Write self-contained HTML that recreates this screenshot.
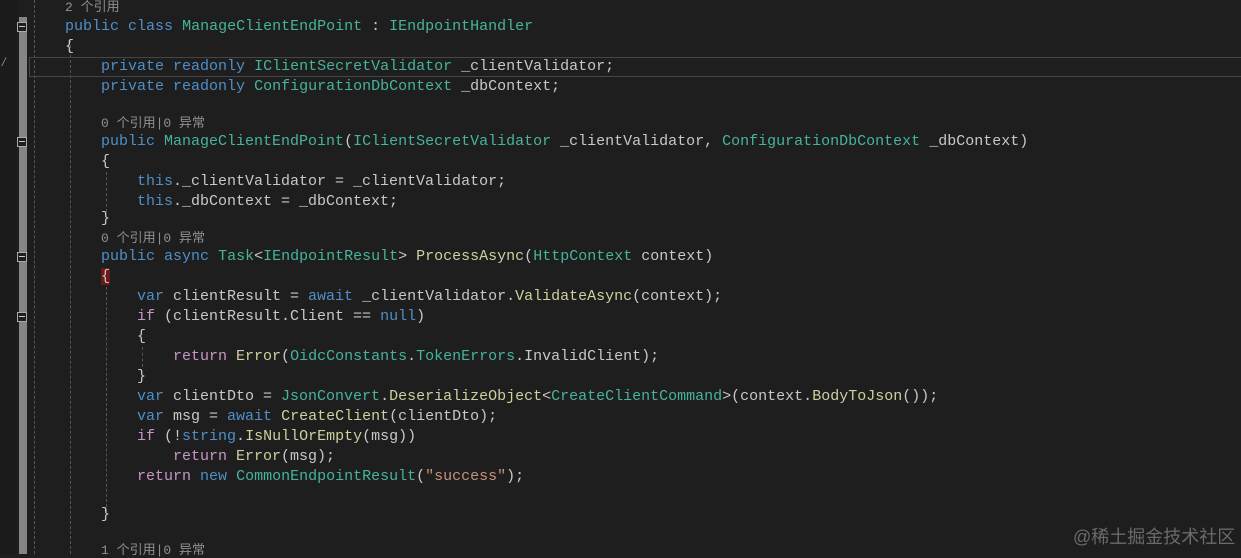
<!DOCTYPE html>
<html><head><meta charset="utf-8"><style>
body{margin:0;width:1241px;height:554px;background:#1e1e1e;overflow:hidden;position:relative;font-family:"Liberation Mono","Noto Sans CJK SC",monospace;}
.l{position:absolute;height:20px;line-height:20px;font-size:15px;color:#c8c8c8;white-space:pre;}
.c{position:absolute;font-size:13px;line-height:14px;color:#909090;white-space:pre;font-family:"Liberation Mono","Noto Sans CJK SC",monospace;}
.k{color:#4f8fc8}.t{color:#46b49c}.m{color:#cfcf9f}.r{color:#c896c8}.s{color:#c8927a}
.g{position:absolute;width:0;border-left:1px dashed #555;}
.box{position:absolute;left:17px;width:8px;height:8px;border:1px solid #aaa;background:#1e1e1e;}
.box:after{content:"";position:absolute;left:1px;top:3px;width:6px;height:1px;background:#ccc;}
</style></head><body>
<div style="position:absolute;left:0;top:0;width:17px;height:554px;background:#1b1b1b"></div>
<div style="position:absolute;left:19px;top:17px;width:8px;height:537px;background:#858585"></div>
<div class="g" style="left:34px;top:0;height:554px"></div>
<div class="g" style="left:70px;top:40px;height:514px"></div>
<div class="g" style="left:106px;top:172px;height:40px"></div>
<div class="g" style="left:106px;top:287px;height:225px"></div>
<div class="g" style="left:142px;top:347px;height:20px"></div>
<div style="position:absolute;left:29px;top:57px;width:1212px;height:18px;border:1px solid #464646"></div>
<div class="box" style="top:22px"></div>
<div class="box" style="top:137px"></div>
<div class="box" style="top:252px"></div>
<div class="box" style="top:312px"></div>
<div style="position:absolute;left:0;top:55px;color:#aaa;font-size:13px">&#8260;</div>

<div class="c" style="left:65px;top:1px">2 个引用</div>
<div class="l" style="left:65px;top:17px"><span class="k">public</span> <span class="k">class</span> <span class="t">ManageClientEndPoint</span> : <span class="t">IEndpointHandler</span></div>
<div class="l" style="left:65px;top:37px">{</div>
<div class="l" style="left:101px;top:57px"><span class="k">private</span> <span class="k">readonly</span> <span class="t">IClientSecretValidator</span> _clientValidator;</div>
<div class="l" style="left:101px;top:77px"><span class="k">private</span> <span class="k">readonly</span> <span class="t">ConfigurationDbContext</span> _dbContext;</div>
<div class="c" style="left:101px;top:117px">0 个引用|0 异常</div>
<div class="l" style="left:101px;top:132px"><span class="k">public</span> <span class="t">ManageClientEndPoint</span>(<span class="t">IClientSecretValidator</span> _clientValidator, <span class="t">ConfigurationDbContext</span> _dbContext)</div>
<div class="l" style="left:101px;top:152px">{</div>
<div class="l" style="left:137px;top:172px"><span class="k">this</span>._clientValidator = _clientValidator;</div>
<div class="l" style="left:137px;top:192px"><span class="k">this</span>._dbContext = _dbContext;</div>
<div class="l" style="left:101px;top:209px">}</div>
<div class="c" style="left:101px;top:232px">0 个引用|0 异常</div>
<div class="l" style="left:101px;top:247px"><span class="k">public</span> <span class="k">async</span> <span class="t">Task</span>&lt;<span class="t">IEndpointResult</span>&gt; <span class="m">ProcessAsync</span>(<span class="t">HttpContext</span> context)</div>
<div class="l" style="left:101px;top:267px"><span style="background:#6b1a1a">{</span></div>
<div class="l" style="left:137px;top:287px"><span class="k">var</span> clientResult = <span class="k">await</span> _clientValidator.<span class="m">ValidateAsync</span>(context);</div>
<div class="l" style="left:137px;top:307px"><span class="r">if</span> (clientResult.Client == <span class="k">null</span>)</div>
<div class="l" style="left:137px;top:327px">{</div>
<div class="l" style="left:173px;top:347px"><span class="r">return</span> <span class="m">Error</span>(<span class="t">OidcConstants</span>.<span class="t">TokenErrors</span>.InvalidClient);</div>
<div class="l" style="left:137px;top:367px">}</div>
<div class="l" style="left:137px;top:387px"><span class="k">var</span> clientDto = <span class="t">JsonConvert</span>.<span class="m">DeserializeObject</span>&lt;<span class="t">CreateClientCommand</span>&gt;(context.<span class="m">BodyToJson</span>());</div>
<div class="l" style="left:137px;top:407px"><span class="k">var</span> msg = <span class="k">await</span> <span class="m">CreateClient</span>(clientDto);</div>
<div class="l" style="left:137px;top:427px"><span class="r">if</span> (!<span class="k">string</span>.<span class="m">IsNullOrEmpty</span>(msg))</div>
<div class="l" style="left:173px;top:447px"><span class="r">return</span> <span class="m">Error</span>(msg);</div>
<div class="l" style="left:137px;top:467px"><span class="r">return</span> <span class="k">new</span> <span class="t">CommonEndpointResult</span>(<span class="s">"success"</span>);</div>
<div class="l" style="left:101px;top:505px">}</div>
<div class="c" style="left:101px;top:544px">1 个引用|0 异常</div>
<div style="position:absolute;left:1073px;top:523px;font-size:18px;color:#6a6a6a;font-family:'Liberation Sans','Noto Sans CJK SC',sans-serif">@稀土掘金技术社区</div>
</body></html>
